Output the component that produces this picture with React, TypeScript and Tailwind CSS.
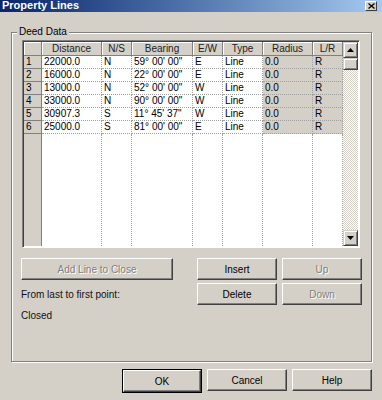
import React from "react";

const ROWS = [
  ["22000.0", "N", "59° 00' 00\"", "E", "Line", "0.0", "R"],
  ["16000.0", "N", "22° 00' 00\"", "E", "Line", "0.0", "R"],
  ["13000.0", "N", "52° 00' 00\"", "W", "Line", "0.0", "R"],
  ["33000.0", "N", "90° 00' 00\"", "W", "Line", "0.0", "R"],
  ["30907.3", "S", "11° 45' 37\"", "W", "Line", "0.0", "R"],
  ["25000.0", "S", "81° 00' 00\"", "E", "Line", "0.0", "R"],
];

const COLS = [
  { title: "Distance", w: "w-[60px]", ro: false },
  { title: "N/S", w: "w-[30px]", ro: false },
  { title: "Bearing", w: "w-[61px]", ro: false },
  { title: "E/W", w: "w-[30px]", ro: false },
  { title: "Type", w: "w-[40px]", ro: false },
  { title: "Radius", w: "w-[50px]", ro: true },
  { title: "L/R", w: "w-[30px]", ro: true },
];

const Btn = ({
  label,
  w,
  disabled,
}: {
  label: string;
  w: string;
  disabled?: boolean;
}) => (
  <div
    className={`${w} h-[22px] flex items-center justify-center bg-[#d4d0c8] border border-t-white border-l-white border-b-[#404040] border-r-[#404040] shadow-[inset_-1px_-1px_0_#808080] ${
      disabled ? "text-[#808080] [text-shadow:1px_1px_0_#fff]" : "text-black"
    }`}
  >
    {label}
  </div>
);

const Arrow = ({ up }: { up?: boolean }) => (
  <div className="h-[16px] flex items-center justify-center bg-[#d4d0c8] border border-t-[#d4d0c8] border-l-[#d4d0c8] border-b-[#404040] border-r-[#404040] shadow-[inset_1px_1px_0_#fff,inset_-1px_-1px_0_#808080]">
    <svg width="7" height="4" viewBox="0 0 7 4">
      {up ? (
        <polygon points="3.5,0 7,4 0,4" fill="#000" />
      ) : (
        <polygon points="0,0 7,0 3.5,4" fill="#000" />
      )}
    </svg>
  </div>
);

export default function App() {
  return (
    <div className="w-[382px] h-[400px] bg-[#d4d0c8] overflow-hidden font-['Liberation_Sans',Arial,sans-serif] text-[10px] text-black">
      {/* title bar */}
      <div className="h-[12px] flex items-start justify-between bg-gradient-to-r from-[#0a246a] to-[#a6caf0]">
        <span className="pl-[2px] text-white font-bold text-[11px] leading-[10px]">
          Property Lines
        </span>
        <div className="mr-[5px] mt-[1px] w-[12px] h-[10px] flex items-center justify-center bg-[#d4d0c8] border border-t-white border-l-white border-b-[#404040] border-r-[#404040]">
          <svg width="7" height="6" viewBox="0 0 7 6">
            <path d="M0.5 0.5 L6.5 5.5 M6.5 0.5 L0.5 5.5" stroke="#000" strokeWidth="1.3" />
          </svg>
        </div>
      </div>

      {/* Deed Data group */}
      <div className="relative mt-[20px] ml-[11px] w-[361px] h-[330px] border border-[#808080] shadow-[inset_1px_1px_0_#fff,1px_1px_0_#fff] pt-[7px] pl-[9px]">
        <span className="absolute left-[5px] top-[-7px] px-[2px] bg-[#d4d0c8] leading-[12px]">
          Deed Data
        </span>

        {/* grid */}
        <div className="ml-[1px] w-[338px] h-[208px] flex p-[1px] border border-t-[#808080] border-l-[#808080] border-b-white border-r-white shadow-[inset_1px_1px_0_#404040] bg-white">
          <div className="flex-1 flex flex-col">
            <div className="h-[14px] flex shrink-0">
              <div className="w-[18px] bg-[#d4d0c8] border-r border-b border-[#808080] shadow-[inset_1px_1px_0_#fff]" />
              {COLS.map((c) => (
                <div
                  key={c.title}
                  className={`${c.w} bg-[#d4d0c8] border-r border-b border-[#808080] shadow-[inset_1px_1px_0_#fff] text-center leading-[13px] text-[#222]`}
                >
                  {c.title}
                </div>
              ))}
            </div>
            {ROWS.map((r, i) => (
              <div key={i} className="h-[13px] flex shrink-0">
                <div className="w-[18px] bg-[#d4d0c8] border-r border-b border-[#808080] pl-[2px] leading-[12px]">
                  {i + 1}
                </div>
                {r.map((v, j) => (
                  <div
                    key={j}
                    className={`${COLS[j].w} ${
                      COLS[j].ro ? "bg-[#d4d0c8]" : "bg-white"
                    } border-r border-b border-dotted border-[#a0a0a0] pl-[2px] leading-[12px] whitespace-nowrap overflow-hidden`}
                  >
                    {v}
                  </div>
                ))}
              </div>
            ))}
            <div className="flex-1 flex">
              <div className="w-[18px] bg-[#d4d0c8] border-r border-[#808080]" />
              {COLS.map((c) => (
                <div
                  key={c.title}
                  className={`${c.w} border-r border-dotted border-[#a0a0a0]`}
                />
              ))}
            </div>
          </div>

          {/* scrollbar */}
          <div className="w-[15px] flex flex-col">
            <Arrow up />
            <div className="h-[12px] bg-[#d4d0c8] border border-t-[#d4d0c8] border-l-[#d4d0c8] border-b-[#404040] border-r-[#404040] shadow-[inset_1px_1px_0_#fff,inset_-1px_-1px_0_#808080]" />
            <div className="flex-1 bg-[image:repeating-conic-gradient(#d4d0c8_0%_25%,#ffffff_0%_50%)] bg-[length:2px_2px]" />
            <Arrow />
          </div>
        </div>

        {/* controls */}
        <div className="flex mt-[10px]">
          <div className="w-[152px] flex flex-col">
            <Btn label="Add Line to Close" w="w-[152px]" disabled />
            <div className="mt-[9px] leading-[12px] text-[#111]">From last to first point:</div>
            <div className="mt-[9px] leading-[12px] text-[#111]">Closed</div>
          </div>
          <div className="ml-[24px] flex flex-col gap-[3px]">
            <div className="flex gap-[5px]">
              <Btn label="Insert" w="w-[80px]" />
              <Btn label="Up" w="w-[80px]" disabled />
            </div>
            <div className="flex gap-[5px]">
              <Btn label="Delete" w="w-[80px]" />
              <Btn label="Down" w="w-[80px]" disabled />
            </div>
          </div>
        </div>
      </div>

      {/* dialog buttons */}
      <div className="mt-[7px] flex justify-end gap-[5px] pr-[10px]">
        <div className="border border-black">
          <Btn label="OK" w="w-[78px]" />
        </div>
        <Btn label="Cancel" w="w-[80px]" />
        <Btn label="Help" w="w-[80px]" />
      </div>
    </div>
  );
}
